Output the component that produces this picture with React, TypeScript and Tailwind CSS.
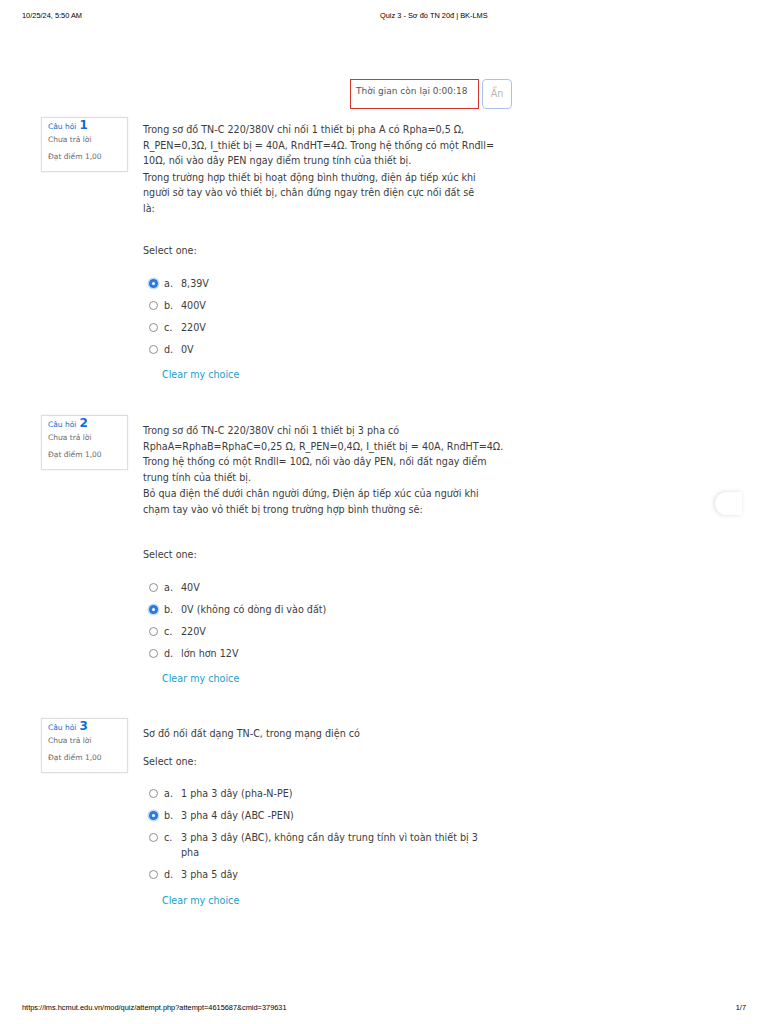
import React from 'react';

const FONT = { fontFamily: '"DejaVu Sans", "Noto Sans", sans-serif' };
const PRINT = { fontFamily: '"Liberation Sans", Arial, sans-serif' };

type Opt = { key: string; text: React.ReactNode; checked?: boolean };

const Radio = ({ checked }: { checked?: boolean }) =>
  checked ? (
    <span className="block flex-none w-[9px] h-[9px] rounded-full bg-[#2f7fe6] border border-[#1f6ad0] flex items-center justify-center shadow-[0_0_0_1.5px_rgba(120,170,240,0.45)]">
      <span className="block w-[3px] h-[3px] rounded-full bg-white" />
    </span>
  ) : (
    <span className="block flex-none w-[9px] h-[9px] rounded-full border border-[#8f8f8f] bg-white" />
  );

function InfoBox({ n }: { n: number }) {
  return (
    <div className="w-[87px] h-[55px] border border-[#dedede] shadow-[0_0_2px_rgba(0,0,0,0.08)] px-[6px] flex-none">
      <div className="flex items-baseline gap-[3px] text-[#0f6cd0]">
        <span className="text-[7.5px]">Câu hỏi</span>
        <span className="text-[12px] font-bold leading-[15px]">{n}</span>
      </div>
      <div className="text-[7.5px] text-[#6b6b6b] leading-[10px] mt-[2px]">Chưa trả lời</div>
      <div className="text-[7.5px] text-[#6b6b6b] leading-[10px] mt-[7px]">Đạt điểm 1,00</div>
    </div>
  );
}

function Options({ opts }: { opts: Opt[] }) {
  return (
    <div className="flex flex-col pl-[6px]">
      {opts.map((o) => (
        <div key={o.key} className="flex items-start py-[3.5px] leading-[15px]">
          <span className="mt-[3px]"><Radio checked={o.checked} /></span>
          <span className="ml-[6px] w-[17px] flex-none">{o.key}.</span>
          <span>{o.text}</span>
        </div>
      ))}
      <div className="text-[#1aa0c8] ml-[13px] mt-[7px] leading-[15px]">Clear my choice</div>
    </div>
  );
}

function Question({
  n,
  paras,
  top,
  gap,
  opts,
}: {
  n: number;
  paras: React.ReactNode[];
  top: string;
  gap: string;
  opts: Opt[];
}) {
  return (
    <div className="flex">
      <div className="w-[102px] flex-none"><InfoBox n={n} /></div>
      <div className={`text-[9.6px] text-[#3c3c3c] ${top}`}>
        {paras.map((p, i) => (
          <p key={i} className={`leading-[15.5px] ${i > 0 ? 'mt-[1px]' : ''}`}>{p}</p>
        ))}
        <div className={`${gap} leading-[15px]`}>Select one:</div>
        <div className="mt-[14px]"><Options opts={opts} /></div>
      </div>
    </div>
  );
}

export default function App() {
  return (
    <div className="w-[768px] h-[1024px] bg-white relative overflow-hidden" style={FONT}>
      <header className="h-[32px] flex items-center px-[22px] text-[7.4px] text-black" style={PRINT}>
        <span className="w-[358px] flex-none">10/25/24, 5:50 AM</span>
        <span>Quiz 3 - Sơ đồ TN 20đ | BK-LMS</span>
      </header>

      <div className="flex justify-end pr-[256px] mt-[47px] gap-[3px]">
        <div className="border border-[#d9342b] h-[30px] w-[129px] pl-[5px] pt-[5px] text-[9px] text-[#555] whitespace-nowrap">
          Thời gian còn lại 0:00:18
        </div>
        <div className="border border-[#a9c3f0] rounded-[4px] h-[30px] w-[30px] flex items-center justify-center text-[9.6px] text-[#b5b5b5]">
          Ẩn
        </div>
      </div>

      <main className="pl-[41px] mt-[8px] flex flex-col">
        <Question
          n={1}
          top="pt-[5px]"
          gap="mt-[27px]"
          paras={[
            <>Trong sơ đồ TN-C 220/380V chỉ nối 1 thiết bị pha A có Rpha=0,5 Ω,<br />R_PEN=0,3Ω, I_thiết bị = 40A, RnđHT=4Ω. Trong hệ thống có một Rnđll=<br />10Ω, nối vào dây PEN ngay điểm trung tính của thiết bị.</>,
            <>Trong trường hợp thiết bị hoạt động bình thường, điện áp tiếp xúc khi<br />người sờ tay vào vỏ thiết bị, chân đứng ngay trên điện cực nối đất sẽ<br />là:</>,
          ]}
          opts={[
            { key: 'a', text: '8,39V', checked: true },
            { key: 'b', text: '400V' },
            { key: 'c', text: '220V' },
            { key: 'd', text: '0V' },
          ]}
        />

        <div className="mt-[33px]">
          <Question
            n={2}
            top="pt-[8px]"
            gap="mt-[30px]"
            paras={[
              <>Trong sơ đồ TN-C 220/380V chỉ nối 1 thiết bị 3 pha có<br />RphaA=RphaB=RphaC=0,25 Ω, R_PEN=0,4Ω, I_thiết bị = 40A, RnđHT=4Ω.<br />Trong hệ thống có một Rnđll= 10Ω, nối vào dây PEN, nối đất ngay điểm<br />trung tính của thiết bị.</>,
              <>Bỏ qua điện thế dưới chân người đứng, Điện áp tiếp xúc của người khi<br />chạm tay vào vỏ thiết bị trong trường hợp bình thường sẽ:</>,
            ]}
            opts={[
              { key: 'a', text: '40V' },
              { key: 'b', text: '0V (không có dòng đi vào đất)', checked: true },
              { key: 'c', text: '220V' },
              { key: 'd', text: 'lớn hơn 12V' },
            ]}
          />
        </div>

        <div className="mt-[32px]">
          <Question
            n={3}
            top="pt-[8px]"
            gap="mt-[12px]"
            paras={[<>Sơ đồ nối đất dạng TN-C, trong mạng điện có</>]}
            opts={[
              { key: 'a', text: '1 pha 3 dây (pha-N-PE)' },
              { key: 'b', text: '3 pha 4 dây (ABC -PEN)', checked: true },
              { key: 'c', text: <>3 pha 3 dây (ABC), không cần dây trung tính vì toàn thiết bị 3<br />pha</> },
              { key: 'd', text: '3 pha 5 dây' },
            ]}
          />
        </div>
      </main>

      <div className="absolute left-[715px] top-[492px] w-[27px] h-[23px] rounded-l-full bg-white shadow-[-1px_0_4px_rgba(0,0,0,0.15)]" />

      <footer className="absolute left-0 right-0 top-[1002px] flex justify-between px-[22px] text-[7.4px] text-black" style={PRINT}>
        <span>https://lms.hcmut.edu.vn/mod/quiz/attempt.php?attempt=4615687&cmid=379631</span>
        <span>1/7</span>
      </footer>
    </div>
  );
}
